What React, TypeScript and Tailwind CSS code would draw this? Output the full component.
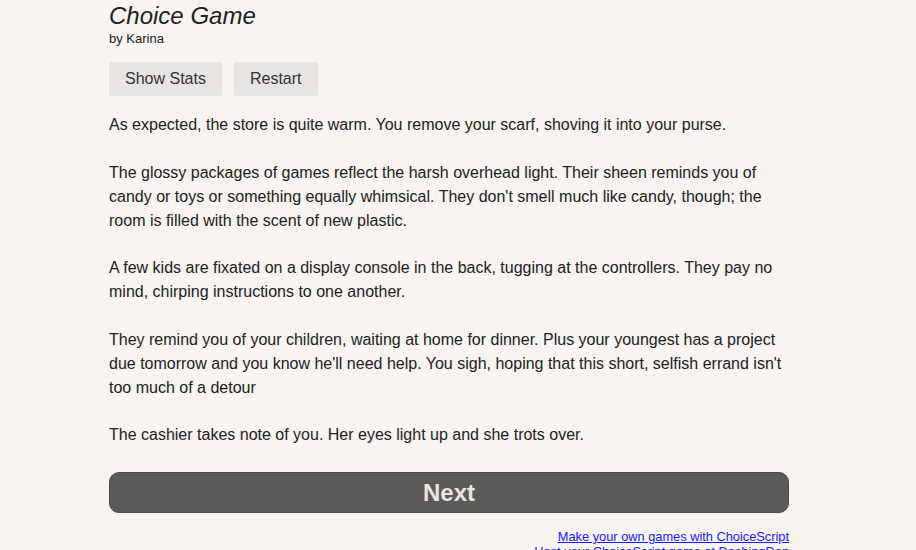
import React from 'react';

const paragraphs = [
  'As expected, the store is quite warm. You remove your scarf, shoving it into your purse.',
  "The glossy packages of games reflect the harsh overhead light. Their sheen reminds you of candy or toys or something equally whimsical. They don't smell much like candy, though; the room is filled with the scent of new plastic.",
  'A few kids are fixated on a display console in the back, tugging at the controllers. They pay no mind, chirping instructions to one another.',
  "They remind you of your children, waiting at home for dinner. Plus your youngest has a project due tomorrow and you know he'll need help. You sigh, hoping that this short, selfish errand isn't too much of a detour",
  'The cashier takes note of you. Her eyes light up and she trots over.',
];

const App: React.FC = () => {
  return (
    <div className="bg-[#f7f4f1] text-[#222] font-['Liberation_Sans',Arial,sans-serif] overflow-hidden h-[550px]">
      <div className="ml-[109px] w-[680px]">
        {/* header */}
        <h1 className="pt-[2px] text-[24px] leading-[28px] italic text-[#222]">Choice Game</h1>
        <p className="text-[13px] leading-[15px] mt-[1px]">by Karina</p>

        <div className="flex gap-3 mt-[16px]">
          <button className="h-[34px] px-4 bg-[#e6e5e4] rounded-[2px] text-[16px] text-[#333]">Show Stats</button>
          <button className="h-[34px] px-4 bg-[#e6e5e4] rounded-[2px] text-[16px] text-[#333]">Restart</button>
        </div>

        {/* story text */}
        <div className="mt-[17px] flex flex-col gap-[23.5px] text-[16px] leading-[24px]">
          {paragraphs.map((p, i) => (
            <p key={i}>{p}</p>
          ))}
        </div>

        <button className="mt-[25px] w-full h-[41px] rounded-[10px] bg-[#5b5a58] border border-[#4a4947] text-[#e9e5e0] text-[24px] font-bold">
          Next
        </button>

        <div className="mt-[16px] flex flex-col items-end text-[12.8px] leading-[15px] text-[#1a1aff]">
          <a href="#" className="underline">Make your own games with ChoiceScript</a>
          <a href="#" className="underline">Host your ChoiceScript game at DashingDon</a>
        </div>
      </div>
    </div>
  );
};

export default App;
